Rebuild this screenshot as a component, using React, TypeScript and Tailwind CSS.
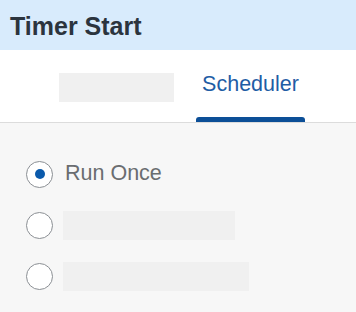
import React from "react";

function Radio({ checked }: { checked?: boolean }) {
  return (
    <div className="w-[27px] h-[27px] shrink-0 rounded-full border-[1.5px] border-[#8b8f94] bg-white flex items-center justify-center">
      {checked && <div className="w-[10px] h-[10px] rounded-full bg-[#0b5aab]" />}
    </div>
  );
}

export default function App() {
  return (
    <div
      className="w-[356px] h-[312px] overflow-hidden bg-[#f7f7f7] flex flex-col"
      style={{ fontFamily: '"Liberation Sans", Arial, sans-serif' }}
    >
      <div className="h-[50px] shrink-0 bg-[#d8ebfc] flex items-center px-[10px]">
        <span className="text-[25px] font-bold text-[#2b343e] leading-none pt-[2px]">Timer Start</span>
      </div>
      <div className="h-[73px] shrink-0 bg-white border-b border-[#dcdcdc] flex items-stretch">
        <div className="ml-[59px] mt-[23px] w-[115px] h-[29px] bg-[#f0f0f0]" />
        <div className="ml-[22px] w-[109px] flex flex-col items-center">
          <div className="flex-1 flex items-center">
            <span className="text-[21.5px] text-[#1f5da5] leading-none pt-[2px]">Scheduler</span>
          </div>
          <div className="w-full h-[5px] rounded-t-[3px] bg-[#0c4f97]" />
        </div>
      </div>
      <div className="flex flex-col gap-[23px] pt-[37px] pl-[26px]">
        <div className="h-[28px] flex items-center gap-[10px]">
          <Radio checked />
          <span className="ml-[2px] text-[21.5px] text-[#6a6d70] leading-none">Run Once</span>
        </div>
        <div className="h-[28px] flex items-center gap-[10px]">
          <Radio />
          <div className="w-[172px] h-[29px] bg-[#f0f0f0]" />
        </div>
        <div className="h-[28px] flex items-center gap-[10px]">
          <Radio />
          <div className="w-[186px] h-[29px] bg-[#f0f0f0]" />
        </div>
      </div>
    </div>
  );
}
